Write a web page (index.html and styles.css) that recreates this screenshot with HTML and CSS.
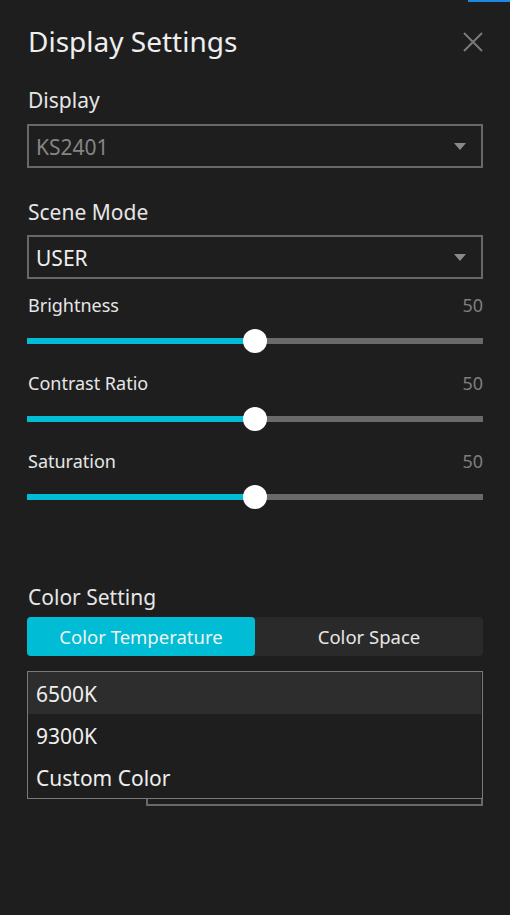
FILE: index.html
```html
<!DOCTYPE html>
<html lang="en">
<head>
<meta charset="utf-8">
<title>Display Settings</title>
<link rel="stylesheet" href="styles.css">
</head>
<body>
<div class="accent"></div>
<main class="panel">
  <header class="head">
    <h1 class="title">Display Settings</h1>
    <button class="close" aria-label="Close">
      <svg width="20" height="20" viewBox="0 0 20 20"><path d="M1 1 L19 19 M19 1 L1 19" stroke="#7a7a7a" stroke-width="2" fill="none"/></svg>
    </button>
  </header>

  <section class="field field-display">
    <div class="label">Display</div>
    <div class="select disabled">
      <span class="select-text">KS2401</span>
      <svg class="arrow" width="12" height="7" viewBox="0 0 12 7"><path d="M0 0 H12 L6 7 Z" fill="#8a8a8a"/></svg>
    </div>
  </section>

  <section class="field field-scene">
    <div class="label">Scene Mode</div>
    <div class="select">
      <span class="select-text">USER</span>
      <svg class="arrow" width="12" height="7" viewBox="0 0 12 7"><path d="M0 0 H12 L6 7 Z" fill="#8a8a8a"/></svg>
    </div>
  </section>

  <section class="sliders">
    <div class="slider">
      <div class="slider-head"><span>Brightness</span><span class="val">50</span></div>
      <div class="track"><div class="fill" style="width:50%"></div><div class="thumb" style="left:50%"></div></div>
    </div>
    <div class="slider">
      <div class="slider-head"><span>Contrast Ratio</span><span class="val">50</span></div>
      <div class="track"><div class="fill" style="width:50%"></div><div class="thumb" style="left:50%"></div></div>
    </div>
    <div class="slider">
      <div class="slider-head"><span>Saturation</span><span class="val">50</span></div>
      <div class="track"><div class="fill" style="width:50%"></div><div class="thumb" style="left:50%"></div></div>
    </div>
  </section>

  <section class="color">
    <div class="label">Color Setting</div>
    <div class="tabs">
      <button class="tab active">Color Temperature</button>
      <button class="tab">Color Space</button>
    </div>
    <div class="dropwrap">
      <div class="select under"></div>
      <ul class="list">
        <li class="item hover">6500K</li>
        <li class="item">9300K</li>
        <li class="item">Custom Color</li>
      </ul>
    </div>
  </section>
</main>
</body>
</html>
```
FILE: styles.css
```css
* { box-sizing: border-box; }
html, body { margin: 0; padding: 0; }
body {
  width: 510px;
  height: 915px;
  overflow: hidden;
  background: #1e1e1e;
  font-family: "Noto Sans", "Open Sans", sans-serif;
  color: #e6e6e6;
  position: relative;
}
.accent {
  position: absolute;
  top: 0;
  right: 0;
  width: 42px;
  height: 2px;
  background: #1e88e5;
}
.panel {
  padding: 0 27px;
}
.head {
  margin-top: 25px;
  height: 32px;
  display: flex;
  align-items: center;
  justify-content: space-between;
}
.title {
  margin: 0;
  font-size: 28px;
  line-height: 32px;
  font-weight: 400;
  color: #eeeeee;
  padding-left: 1px;
}
.close {
  background: none;
  border: 0;
  padding: 0;
  width: 20px;
  height: 20px;
  display: flex;
  margin-top: 2px;
}
.label {
  font-size: 21px;
  line-height: 26px;
  color: #e6e6e6;
  padding-left: 1px;
}
.field-display { margin-top: 30px; }
.field-scene { margin-top: 31px; }
.field .label { margin-bottom: 11px; }
.field-scene .label { margin-bottom: 10px; }
.select {
  height: 44px;
  border: 2px solid #686868;
  display: flex;
  align-items: center;
  justify-content: space-between;
  padding: 2px 15px 0 7px;
}
.select-text {
  font-size: 21px;
  line-height: 40px;
  color: #eeeeee;
}
.select.disabled .select-text { color: #858585; }
.arrow { display: block; margin-top: -2px; }

.sliders { margin-top: 15px; display: flex; flex-direction: column; gap: 19px; }
.slider-head {
  display: flex;
  justify-content: space-between;
  font-size: 18px;
  line-height: 22px;
  padding-left: 1px;
}
.val { color: #7e7e7e; }
.track {
  position: relative;
  margin-top: 13px;
  height: 24px;
  display: flex;
  align-items: center;
  background: linear-gradient(#6a6a6a, #6a6a6a) no-repeat center / 100% 6px;
}
.fill {
  height: 6px;
  background: #00bcd4;
}
.thumb {
  position: absolute;
  top: 0;
  width: 24px;
  height: 24px;
  margin-left: -12px;
  border-radius: 50%;
  background: #ffffff;
}

.color { margin-top: 75px; }
.tabs {
  margin-top: 7px;
  display: flex;
  height: 39px;
  background: #2a2a2a;
  border-radius: 4px;
}
.tab {
  flex: 1;
  border: 0;
  background: transparent;
  font-family: inherit;
  font-size: 18.5px;
  color: #e6e6e6;
  border-radius: 4px;
  padding: 0;
  line-height: 39px;
}
.tab.active { background: #00bcd4; color: #f2f2f2; }
.dropwrap {
  position: relative;
  margin-top: 15px;
  height: 135px;
  padding-top: 91px;
}
.select.under {
  margin-left: 119px;
  height: 44px;
}
.list {
  position: absolute;
  top: 0;
  left: 0;
  right: 0;
  margin: 0;
  padding: 0;
  list-style: none;
  border: 1px solid #7a7a7a;
  background: #1e1e1e;
}
.item {
  height: 42px;
  line-height: 42px;
  padding: 1px 0 0 8px;
  font-size: 21px;
  color: #eeeeee;
}
.item.hover { background: #2d2d2d; margin-right: 1px; }
```
